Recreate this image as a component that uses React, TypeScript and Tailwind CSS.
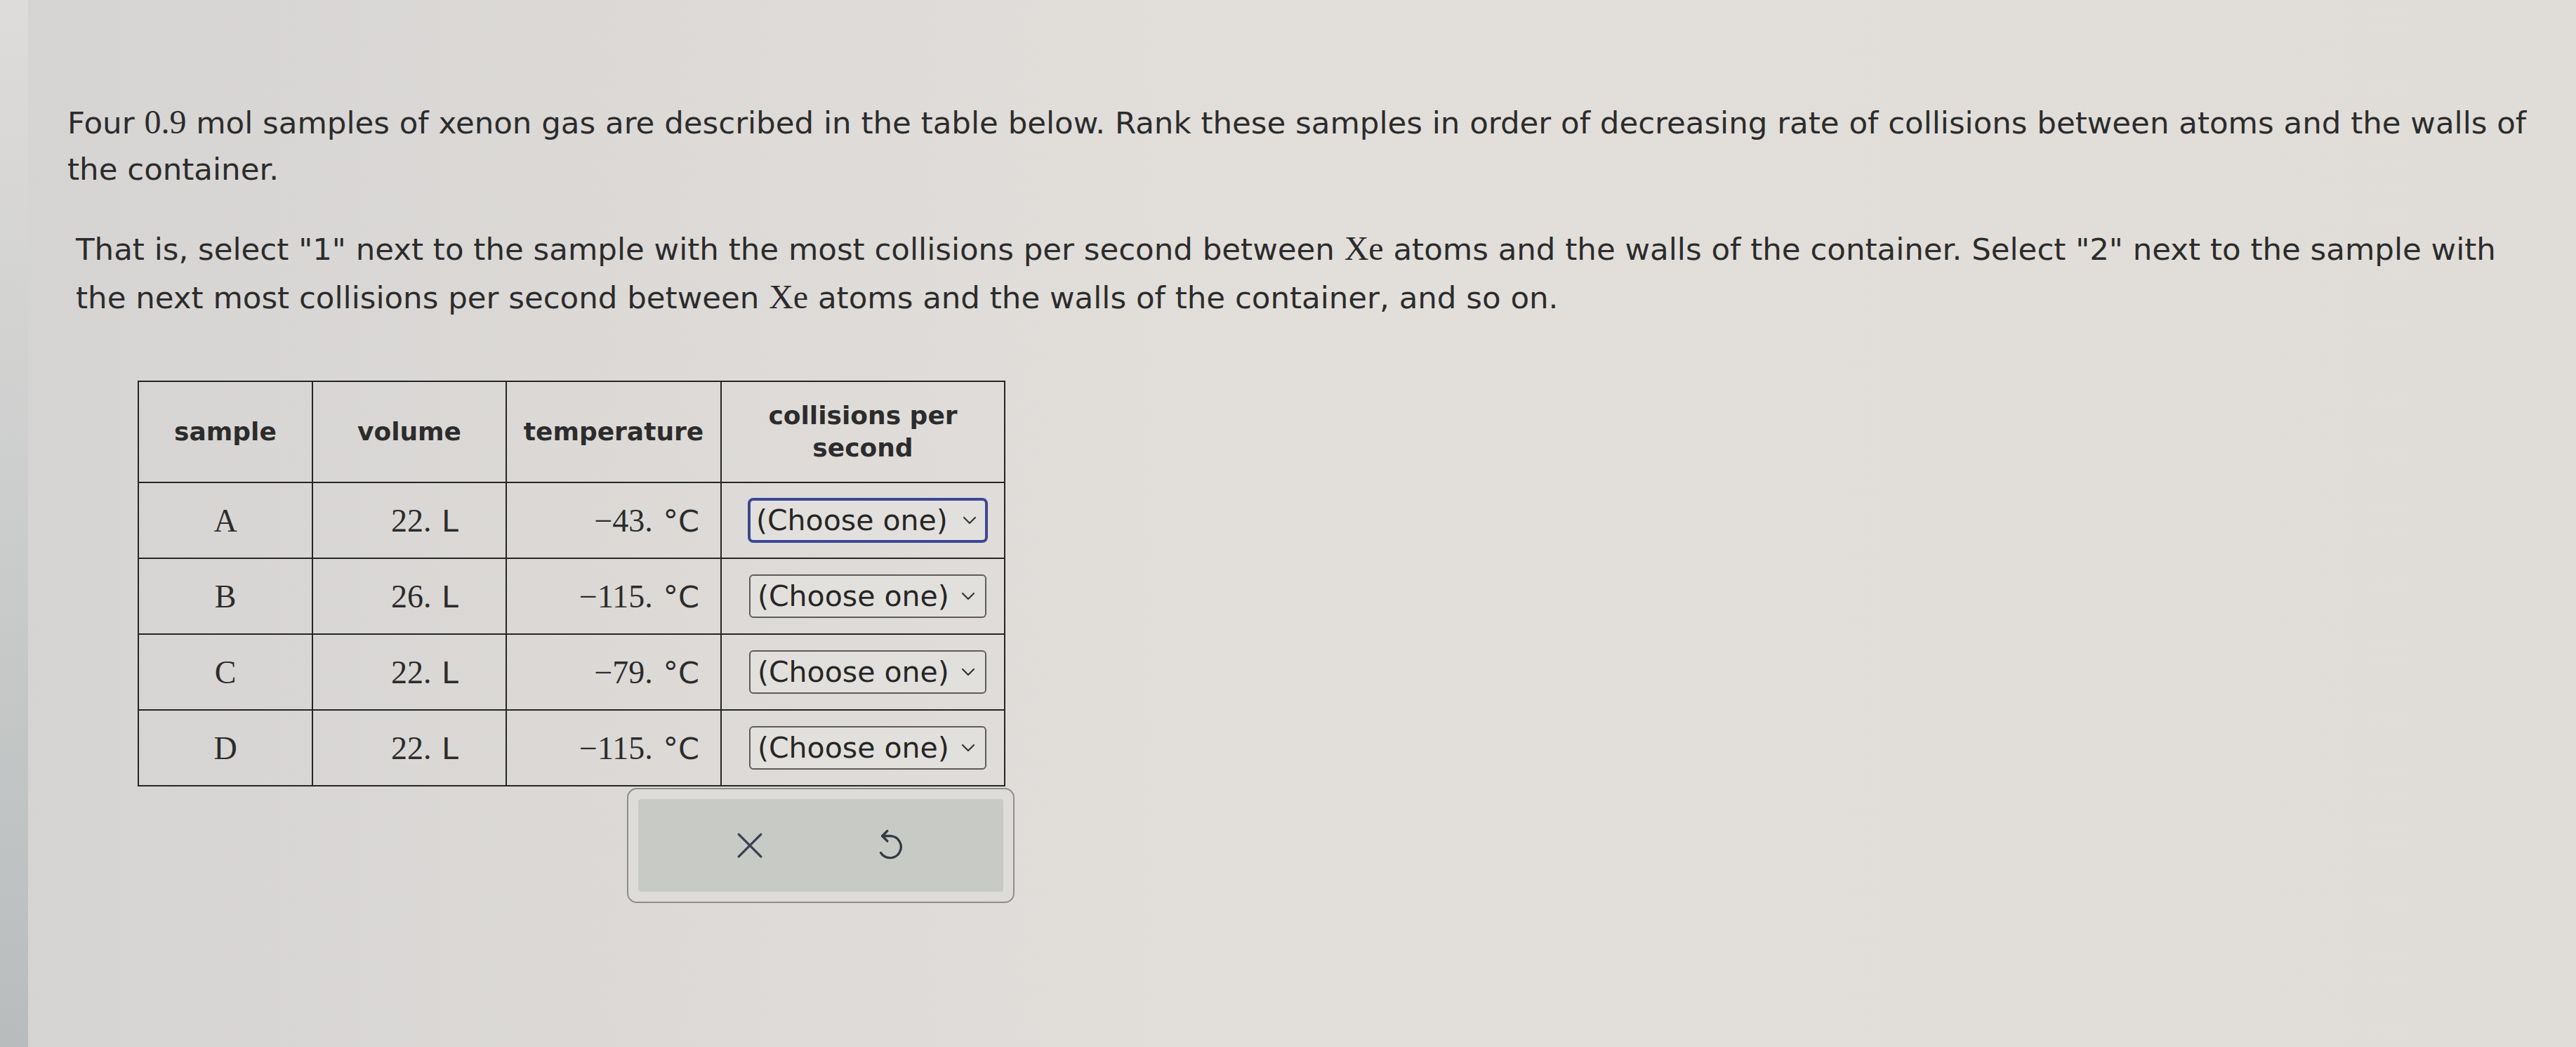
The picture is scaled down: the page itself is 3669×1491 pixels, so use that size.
import React from "react";

const sans = "font-['DejaVu_Sans',Verdana,sans-serif]";
const serif = "font-['Liberation_Serif','Times_New_Roman',serif]";

const rows = [
  { sample: "A", vol: "22.", temp: "\u221243.", focus: true },
  { sample: "B", vol: "26.", temp: "\u2212115.", focus: false },
  { sample: "C", vol: "22.", temp: "\u221279.", focus: false },
  { sample: "D", vol: "22.", temp: "\u2212115.", focus: false },
];

function Chevron() {
  return (
    <svg width="20" height="12" viewBox="0 0 20 12" fill="none" className="shrink-0">
      <path d="M2 2 L10 10 L18 2" stroke="#333" strokeWidth="2.2" strokeLinecap="round" strokeLinejoin="round" />
    </svg>
  );
}

function ChooseOne({ focus }: { focus: boolean }) {
  return (
    <div
      className={
        focus
          ? "flex h-[64px] w-[342px] items-center justify-between rounded-[8px] border-[4px] border-[#3b4794] bg-[#e2e0dc] pl-[8px] pr-[12px]"
          : "flex h-[62px] w-[338px] items-center justify-between rounded-[6px] border-[2px] border-[#5c5c5c] bg-[#e2e0dc] pl-[10px] pr-[14px]"
      }
    >
      <span className={`${sans} text-[41px] leading-none text-[#262626]`}>(Choose one)</span>
      <Chevron />
    </div>
  );
}

function UndoIcon() {
  return (
    <svg width="44" height="54" viewBox="0 0 42 52" fill="none">
      <path d="M17 6 L10 13 L17 20" stroke="#333a44" strokeWidth="3.2" strokeLinecap="round" strokeLinejoin="round" />
      <path d="M10 13 H21 A15 15 0 1 1 8 36" stroke="#333a44" strokeWidth="3.2" strokeLinecap="round" />
    </svg>
  );
}

function CloseIcon() {
  return (
    <svg width="38" height="38" viewBox="0 0 36 36" fill="none">
      <path d="M3 3 L33 33 M33 3 L3 33" stroke="#3a4150" strokeWidth="3.2" strokeLinecap="round" />
    </svg>
  );
}

export default function App() {
  const cell = "border-[2px] border-[#262626]";
  return (
    <div className="min-h-[1491px] w-full overflow-hidden bg-gradient-to-r from-[#d6d4d3] via-[#e2dfdb] to-[#e0ddd8]">
      <div className="flex min-h-[1491px]">
        <div className="w-[40px] shrink-0 bg-gradient-to-b from-[#dedcda] via-[#cbcdcc] to-[#b9bcbd]" />
        <div className={`${sans} flex-1 pl-[56px] pt-[141px] text-[#2c2c2c]`}>
          <p className="whitespace-nowrap text-[43.5px] leading-[66px]">
            Four <span className={`${serif} text-[48px]`}>0.9</span> mol samples of xenon gas are described in the table below. Rank these samples in order of decreasing rate of collisions between atoms and the walls of
            <br />
            the container.
          </p>
          <p className="mt-[46px] whitespace-nowrap pl-[12px] text-[43.5px] leading-[68px]">
            That is, select "1" next to the sample with the most collisions per second between <span className={`${serif} text-[48px]`}>Xe</span> atoms and the walls of the container. Select "2" next to the sample with
            <br />
            the next most collisions per second between <span className={`${serif} text-[48px]`}>Xe</span> atoms and the walls of the container, and so on.
          </p>

          <div className="ml-[100px] mt-[84px] w-fit">
            <table className="border-collapse border-[2px] border-[#262626]">
              <thead>
                <tr className="h-[144px]">
                  <th className={`${cell} w-[248px] text-[36px] font-bold leading-[46px]`}>sample</th>
                  <th className={`${cell} w-[276px] text-[36px] font-bold leading-[46px]`}>volume</th>
                  <th className={`${cell} w-[306px] text-[36px] font-bold leading-[46px]`}>temperature</th>
                  <th className={`${cell} w-[404px] text-[36px] font-bold leading-[46px]`}>
                    collisions per
                    <br />
                    second
                  </th>
                </tr>
              </thead>
              <tbody>
                {rows.map((r) => (
                  <tr key={r.sample} className="h-[108px]">
                    <td className={`${cell} ${serif} text-center text-[46px]`}>{r.sample}</td>
                    <td className={`${cell} pl-[44px] text-center text-[46px]`}>
                      <span className={serif}>{r.vol}</span> <span className={`${sans} text-[43px]`}>L</span>
                    </td>
                    <td className={`${cell} pr-[30px] text-right text-[46px]`}>
                      <span className={serif}>{r.temp}</span> <span className={`${sans} text-[43px]`}>°C</span>
                    </td>
                    <td className={`${cell} px-[16px]`}>
                      <div className="flex justify-center pl-[14px]">
                        <ChooseOne focus={r.focus} />
                      </div>
                    </td>
                  </tr>
                ))}
              </tbody>
            </table>

            <div className="ml-[697px] mt-[2px] w-[552px] rounded-[14px] border-[2px] border-[#8e8e8c] bg-[#dedcd8] p-[14px]">
              <div className="flex h-[132px] items-center justify-around rounded-[4px] bg-[#c8cac6] px-[60px]">
                <CloseIcon />
                <UndoIcon />
              </div>
            </div>
          </div>
        </div>
      </div>
    </div>
  );
}
